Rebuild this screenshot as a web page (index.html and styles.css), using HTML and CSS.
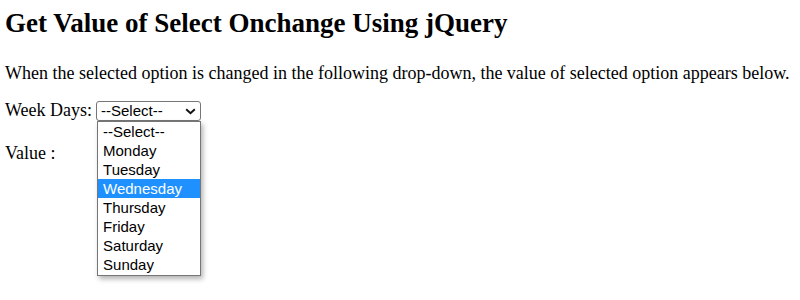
FILE: index.html
```html
<!DOCTYPE html>
<html>
<head>
<meta charset="utf-8">
<link rel="stylesheet" href="styles.css">
</head>
<body>
<h1 class="title">Get Value of Select Onchange Using jQuery</h1>
<p class="intro">When the selected option is changed in the following drop-down, the value of selected option appears below.</p>
<div class="field">
  <span class="label">Week Days:</span>
  <div class="select-wrap">
    <div class="select">
      <span class="select-text">--Select--</span>
      <svg class="chev" width="11" height="7" viewBox="0 0 11 7"><path d="M1.2 1.2 L5.5 5.3 L9.8 1.2" fill="none" stroke="#111" stroke-width="1.9"/></svg>
    </div>
    <ul class="list">
      <li>--Select--</li>
      <li>Monday</li>
      <li>Tuesday</li>
      <li class="active">Wednesday</li>
      <li>Thursday</li>
      <li>Friday</li>
      <li>Saturday</li>
      <li>Sunday</li>
    </ul>
  </div>
</div>
<p class="value">Value :</p>
</body>
</html>
```
FILE: styles.css
```css
html, body { margin: 0; padding: 0; background: #fff; }
html { min-height: 300px; }
body {
  font-family: "Liberation Serif", "Times New Roman", serif;
  font-size: 18px;
  color: #000;
  padding: 8px 8px 0 5px;
  min-height: 300px;
  box-sizing: border-box;
}
.title {
  font-size: 27px;
  font-weight: bold;
  margin: 0;
  line-height: 30px;
}
.intro {
  margin: 25px 0 17px;
  line-height: 20px;
}
.field {
  display: flex;
  align-items: flex-start;
  gap: 4px;
  height: 22px;
}
.label { line-height: 20px; }
.select-wrap {
  position: relative;
  margin-top: 1px;
}
.select {
  width: 105px;
  height: 20px;
  box-sizing: border-box;
  border: 1px solid #767676;
  border-radius: 3px;
  display: flex;
  align-items: center;
  justify-content: space-between;
  padding: 0 4px 0 4px;
  font-family: "Liberation Sans", Arial, sans-serif;
  font-size: 15px;
  background: #fff;
}
.select-text { line-height: 18px; }
.chev { display: block; margin-top: 1px; }
.list {
  position: absolute;
  left: 1px;
  top: 20px;
  width: 104px;
  box-sizing: border-box;
  margin: 0;
  padding: 0 0 1px;
  list-style: none;
  background: #fff;
  border: 1px solid #767676;
  box-shadow: 2px 3px 5px rgba(0,0,0,0.3);
  font-family: "Liberation Sans", Arial, sans-serif;
  font-size: 15px;
}
.list li {
  height: 19px;
  line-height: 19px;
  padding-left: 5px;
}
.list li.active { background: #1e90ff; color: #fff; }
.value {
  margin: 21px 0 0;
  line-height: 20px;
}
```
